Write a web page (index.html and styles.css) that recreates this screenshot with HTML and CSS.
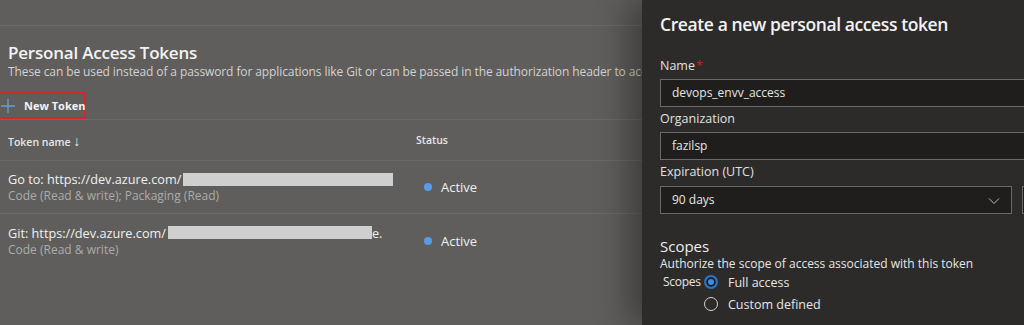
FILE: index.html
```html
<!DOCTYPE html>
<html>
<head>
<meta charset="utf-8">
<link rel="stylesheet" href="styles.css">
</head>
<body>
<div class="screen">
<main class="page">
  <div class="topbar"></div>
  <div class="header">
    <h1 class="title">Personal Access Tokens</h1>
    <p class="subtitle">These can be used instead of a password for applications like Git or can be passed in the authorization header to access</p>
  </div>
  <div class="toolbar">
    <button class="new-token">
      <svg class="plus" width="16" height="16" viewBox="0 0 16 16"><path d="M8 1v14M1 8h14" stroke="#6b9be0" stroke-width="1.3" fill="none"/></svg>
      <span>New Token</span>
    </button>
  </div>
  <div class="table">
    <div class="thead">
      <div class="col-name">Token name <span class="arrow">&#8595;</span></div>
      <div class="col-status">Status</div>
    </div>
    <div class="row">
      <div class="col-name">
        <div class="tok-name">Go to: https://dev.azure.com/<span class="redact r1"></span></div>
        <div class="tok-scope">Code (Read &amp; write); Packaging (Read)</div>
      </div>
      <div class="col-status status"><span class="dot"></span>Active</div>
    </div>
    <div class="row">
      <div class="col-name">
        <div class="tok-name">Git: https://dev.azure.com/<span class="redact r2"></span>e.</div>
        <div class="tok-scope">Code (Read &amp; write)</div>
      </div>
      <div class="col-status status"><span class="dot"></span>Active</div>
    </div>
  </div>
</main>

<aside class="panel">
  <h2 class="panel-title">Create a new personal access token</h2>
  <label class="field-label first">Name<span class="req">*</span></label>
  <div class="input">devops_envv_access</div>
  <label class="field-label">Organization</label>
  <div class="input">fazilsp</div>
  <label class="field-label">Expiration (UTC)</label>
  <div class="exp-row">
    <div class="input select">90 days
      <svg class="chev" width="12" height="8" viewBox="0 0 12 8"><path d="M1 1.5l5 5 5-5" stroke="#bdbbb8" stroke-width="1" fill="none"/></svg>
    </div>
    <div class="input date"></div>
  </div>
  <h3 class="scopes-title">Scopes</h3>
  <p class="scopes-desc">Authorize the scope of access associated with this token</p>
  <div class="scope-group">
    <span class="scope-label">Scopes</span>
    <div class="radios">
      <div class="radio-item"><span class="radio checked"></span>Full access</div>
      <div class="radio-item"><span class="radio"></span>Custom defined</div>
    </div>
  </div>
</aside>
</div>
</body>
</html>
```

FILE: styles.css
```css
* { box-sizing: border-box; }
html, body {
  margin: 0;
  padding: 0;
  width: 1024px;
  height: 325px;
  overflow: hidden;
  background: #5f5e5c;
  font-family: "Open Sans", "Noto Sans", "Liberation Sans", sans-serif;
}
.screen {
  display: flex;
  width: 1024px;
  height: 325px;
}
.page {
  width: 642px;
  flex: none;
  height: 325px;
  overflow: hidden;
  background: #5f5e5c;
  color: #e6e6e6;
}
.topbar {
  height: 26px;
  border-bottom: 1px solid #6a6967;
}
.header {
  padding: 16px 0 0 8px;
}
.title {
  margin: 0;
  font-size: 17px;
  font-weight: 600;
  line-height: 22px;
  color: #f3f3f3;
  letter-spacing: -0.2px;
}
.subtitle {
  margin: 0;
  font-size: 12px;
  line-height: 16px;
  color: #d2d2d2;
  white-space: nowrap;
  letter-spacing: -0.1px;
}
.toolbar {
  margin-top: 12px;
  height: 28px;
  border-bottom: 1px solid #6a6967;
}
.new-token {
  display: flex;
  align-items: center;
  gap: 8px;
  height: 27px;
  width: 86px;
  padding: 0;
  margin: 0;
  background: transparent;
  border: 2px solid #d9242b;
  border-left: none;
  color: #f3f3f3;
  font-family: inherit;
  font-size: 11px;
  font-weight: 700;
  white-space: nowrap;
}
.plus { flex: none; }
.thead {
  display: flex;
  align-items: center;
  height: 41px;
  border-bottom: 1px solid #6a6967;
  font-size: 10.5px;
  font-weight: 600;
  color: #e6e6e6;
}
.col-name {
  width: 416px;
  padding-left: 8px;
  flex: none;
}
.col-status { flex: 1; }
.arrow { font-weight: 400; font-size: 14px; }
.row {
  display: flex;
  align-items: center;
  height: 53px;
  border-bottom: 1px solid #6a6967;
}
.row:last-child { border-bottom: none; }
.tok-name {
  font-size: 12.7px;
  line-height: 18px;
  color: #f0f0f0;
  white-space: nowrap;
  display: flex;
  align-items: center;
}
.tok-scope {
  font-size: 12px;
  line-height: 16px;
  color: #ababab;
}
.redact {
  display: inline-block;
  height: 13px;
  margin-left: 2px;
  background: #cfcfcf;
}
.r1 { width: 210px; }
.r2 { width: 204px; }
.status {
  display: flex;
  align-items: center;
  padding-left: 8px;
  font-size: 13px;
  color: #f0f0f0;
}
.dot {
  width: 8px;
  height: 8px;
  border-radius: 50%;
  background: #5a9ae6;
  margin-right: 9px;
}

.panel {
  flex: none;
  width: 382px;
  height: 325px;
  overflow: hidden;
  background: #2c2b2a;
  box-shadow: -14px 0 30px rgba(0,0,0,0.35);
  padding: 10px 0 0 18px;
  color: #e8e8e8;
  position: relative;
}
.panel-title {
  margin: 0;
  font-size: 17.5px;
  font-weight: 600;
  line-height: 28px;
  color: #f2f2f2;
  letter-spacing: -0.4px;
  white-space: nowrap;
}
.field-label {
  display: block;
  font-size: 12.5px;
  line-height: 18px;
  color: #e0e0e0;
  margin-top: 3px;
}
.field-label.first { margin-top: 19px; }
.field-label + .input { margin-top: 4px; }
.req { color: #c4262e; margin-left: 1px; }
.input {
  height: 28px;
  background: #1f1e1d;
  border: 1px solid #6b6967;
  border-right: none;
  font-size: 12px;
  line-height: 26px;
  padding-left: 11px;
  color: #e6e6e6;
  width: 364px;
}
.exp-row {
  display: flex;
  gap: 10px;
  margin-top: 5px;
}
.exp-row .input {
  border-right: 1px solid #6b6967;
}
.select {
  width: 352px;
  flex: none;
  position: relative;
}
.chev {
  position: absolute;
  right: 11px;
  top: 10px;
}
.date { width: 60px; flex: none; }
.scopes-title {
  margin: 22px 0 0 0;
  font-size: 15px;
  font-weight: 400;
  line-height: 20px;
  color: #eeeeee;
}
.scopes-desc {
  margin: 0;
  font-size: 12px;
  line-height: 16px;
  color: #e6e6e6;
  white-space: nowrap;
}
.scope-group {
  display: flex;
  margin-top: 1px;
  font-size: 12.5px;
  color: #e6e6e6;
}
.scope-label {
  padding-left: 3px;
  width: 44px;
  font-size: 12px;
  letter-spacing: -0.3px;
  line-height: 18px;
  white-space: nowrap;
}
.radios { display: flex; flex-direction: column; gap: 4px; }
.radio-item {
  display: flex;
  align-items: center;
  height: 18px;
}
.radio {
  width: 14px;
  height: 14px;
  border-radius: 50%;
  border: 1px solid #d0d0d0;
  margin-right: 10px;
}
.radio.checked {
  border: 2px solid #2a72c8;
  box-shadow: inset 0 0 0 2px #1f1e1d;
  background-color: #3a8ee6;
}
```
